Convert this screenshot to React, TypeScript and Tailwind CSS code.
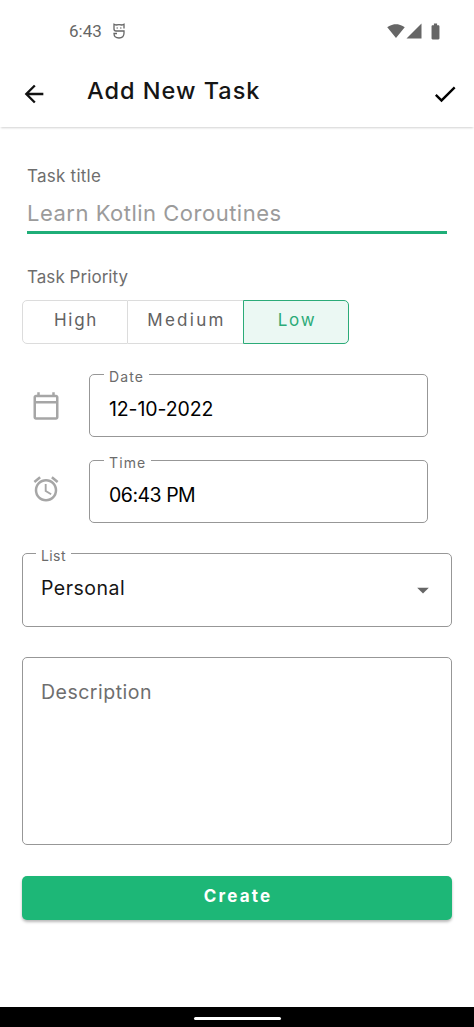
import React from 'react';
import {
  MdArrowBack,
  MdArrowDropDown,
  MdBatteryFull,
  MdCheck,
  MdOutlineAlarm,
  MdOutlineCalendarToday,
  MdSignalCellular4Bar,
  MdSignalWifi4Bar,
} from 'react-icons/md';

interface OutlinedFieldProps {
  label?: string;
  labelClassName?: string;
  className: string;
  children: React.ReactNode;
}

function OutlinedField({ label, labelClassName = '', className, children }: OutlinedFieldProps) {
  return (
    <div className={`relative rounded-[5px] border border-[#979797] ${className}`}>
      {label && (
        <span className={`absolute -top-[8px] bg-white px-[5px] leading-5 text-[#6b6b6b] ${labelClassName}`}>
          {label}
        </span>
      )}
      {children}
    </div>
  );
}

function StatusBar() {
  return (
    <div className="flex h-16 shrink-0 items-center pl-[69px] pr-[29px] pb-[2px] text-[#666666]">
      <span className="font-[Roboto] text-[17px] leading-5">6:43</span>
      <svg className="ml-[11px] h-4 w-3" viewBox="0 0 12 16" fill="none" stroke="currentColor" strokeWidth="1.3">
        <path d="M11 5.500V1.200L9 2Q6 1.200 3 2L1 1.200V6Q1 8 3 8H11V10Q11 15 6 15T1 10.500H4" />
        <path d="M3.500 5H5M7 5H8.500" strokeWidth="1" />
      </svg>
      <div className="ml-auto flex items-center">
        <MdSignalWifi4Bar className="size-[18px]" />
        <MdSignalCellular4Bar className="size-[18px]" />
        <MdBatteryFull className="ml-[3px] size-[19px]" />
      </div>
    </div>
  );
}

export default function App() {
  return (
    <div className="flex h-[1027px] w-[474px] flex-col overflow-hidden bg-white font-['Inter',sans-serif]">
      <StatusBar />

      <header className="flex h-[63px] shrink-0 items-center pl-5 pr-[15px] pb-1 shadow-[0_2px_2px_-1px_rgba(0,0,0,0.18)]">
        <MdArrowBack className="size-7 text-[#111111]" />
        <h1 className="ml-[39px] -mt-[5px] text-[23.5px] leading-8 font-medium tracking-[1px] text-[#151515]">
          Add New Task
        </h1>
        <MdCheck className="ml-auto size-7 text-black" />
      </header>

      <main className="flex flex-1 flex-col px-[22px] pt-[37px]">
        <section className="mx-[5px] flex flex-col">
          <label className="text-[17px] leading-6 tracking-[0.25px] text-[#6e6e6e]">Task title</label>
          <div className="mt-[10px] h-[36px] border-b-[3px] border-[#1fae78] text-[22px] leading-[30px] tracking-[0.5px] text-[#9b9b9b]">
            Learn Kotlin Coroutines
          </div>
          <span className="mt-[31px] text-[17px] leading-6 tracking-[0.05px] text-[#6e6e6e]">Task Priority</span>
        </section>

        <div className="mt-[11px] flex h-[44px] w-[327px] text-[17px] tracking-[1.7px] text-[#626262]">
          <button className="w-[106px] rounded-l-[5px] border border-[#dcdcdc] pb-[2px] pl-[2px]">High</button>
          <button className="w-[115px] border-y border-[#dcdcdc] pb-[2px] pl-[2px] tracking-[2.3px]">Medium</button>
          <button className="w-[106px] rounded-r-[5px] border border-[#2bab78] bg-[#ebf8f3] pb-[2px] pl-[2px] text-[#2bab78]">Low</button>
        </div>

        <div className="mt-[30px] flex items-center">
          <MdOutlineCalendarToday className="ml-[9px] size-[30px] text-[#a6a6a6]" />
          <OutlinedField label="Date" labelClassName="left-[14px] text-[14px] tracking-[1.1px]" className="ml-[28px] h-[63px] w-[339px] pl-[19px]">
            <span className="block pt-[18px] text-[19.5px] leading-8 tracking-[-0.1px] text-black">12-10-2022</span>
          </OutlinedField>
        </div>

        <div className="mt-[23px] flex items-center">
          <MdOutlineAlarm className="ml-[9px] -mt-[6px] size-[30px] text-[#a6a6a6]" />
          <OutlinedField label="Time" labelClassName="left-[14px] text-[14px] tracking-[1.1px]" className="ml-[28px] h-[63px] w-[339px] pl-[19px]">
            <span className="block pt-[18px] text-[19.5px] leading-8 tracking-[-0.5px] text-black">06:43 PM</span>
          </OutlinedField>
        </div>

        <OutlinedField label="List" labelClassName="left-[13px] text-[14px] tracking-[0.4px]" className="mt-[30px] flex h-[74px] justify-between pl-[18px] pr-[14px]">
          <span className="pt-[18px] text-[19.5px] leading-8 tracking-[0.5px] text-[#151515]">Personal</span>
          <MdArrowDropDown className="mt-[22px] size-7 text-[#666666]" />
        </OutlinedField>

        <OutlinedField className="mt-[30px] h-[188px] pl-[18px]">
          <span className="block pt-[18px] text-[19.5px] leading-8 tracking-[0.5px] text-[#6e6e6e]">Description</span>
        </OutlinedField>

        <button className="mt-[31px] h-[44px] rounded-[5px] bg-[#1db777] pb-[2px] pl-[2px] text-[17px] font-bold tracking-[2.2px] text-white shadow-[0_2px_3px_rgba(0,0,0,0.28)]">
          Create
        </button>
      </main>

      <footer className="flex h-5 shrink-0 items-center justify-center bg-black pt-[2px]">
        <div className="h-[3px] w-[87px] rounded-full bg-white" />
      </footer>
    </div>
  );
}
